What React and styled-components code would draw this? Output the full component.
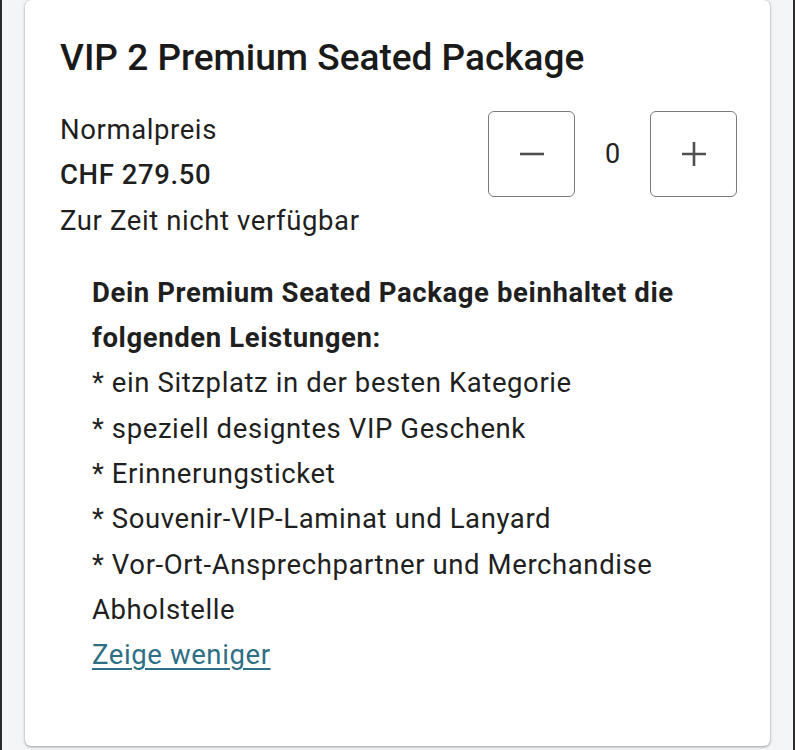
import React, { useState } from 'react'
import styled, { createGlobalStyle } from 'styled-components'

const GlobalStyle = createGlobalStyle`
  html, body {
    margin: 0;
    padding: 0;
    background: #f4f5f7;
  }
  body {
    font-family: Roboto, 'Noto Sans', Arial, sans-serif;
    -webkit-font-smoothing: antialiased;
  }
`

const features = [
  '* ein Sitzplatz in der besten Kategorie',
  '* speziell designtes VIP Geschenk',
  '* Erinnerungsticket',
  '* Souvenir-VIP-Laminat und Lanyard',
  '* Vor-Ort-Ansprechpartner und Merchandise Abholstelle',
]

function App() {
  const [count, setCount] = useState(0)

  return (
    <>
      <GlobalStyle />
      <Frame>
        <Card>
          <Title>VIP 2 Premium Seated Package</Title>

          <PriceRow>
            <PriceInfo>
              <span>Normalpreis</span>
              <Price>CHF 279.50</Price>
              <span>Zur Zeit nicht verfügbar</span>
            </PriceInfo>

            <Stepper>
              <StepButton aria-label="weniger" onClick={() => setCount(Math.max(0, count - 1))}>
                <svg width="26" height="26" viewBox="0 0 26 26">
                  <path d="M1 13h24" stroke="#505050" strokeWidth="2.6" />
                </svg>
              </StepButton>
              <Count>{count}</Count>
              <StepButton aria-label="mehr" onClick={() => setCount(count + 1)}>
                <svg width="26" height="26" viewBox="0 0 26 26">
                  <path d="M1 13h24M13 1v24" stroke="#505050" strokeWidth="2.6" />
                </svg>
              </StepButton>
            </Stepper>
          </PriceRow>

          <Description>
            <Lead>Dein Premium Seated Package beinhaltet die folgenden Leistungen:</Lead>
            {features.map(f => (
              <div key={f}>{f}</div>
            ))}
            <MoreLink href="#">Zeige weniger</MoreLink>
          </Description>
        </Card>
      </Frame>
    </>
  )
}

const Frame = styled.div`
  box-sizing: border-box;
  height: 750px;
  padding: 0 23px 4px 23px;
  border-left: 2px solid #2b2b2b;
  border-right: 2px solid #2b2b2b;
  background: #f4f5f7;
  display: flex;
`

const Card = styled.div`
  flex: 1;
  box-sizing: border-box;
  background: #fff;
  border-radius: 6px;
  box-shadow: 0 1px 3px rgba(0, 0, 0, 0.35), 0 0 1px rgba(0, 0, 0, 0.25);
  padding: 34px 33px 0 35px;
  color: #1f1f1f;
`

const Title = styled.h2`
  margin: 0;
  font-size: 37px;
  line-height: 48px;
  font-weight: 500;
  color: #1a1a1a;
`

const PriceRow = styled.div`
  display: flex;
  justify-content: space-between;
  align-items: flex-start;
  margin-top: 25px;
`

const PriceInfo = styled.div`
  display: flex;
  flex-direction: column;
  font-size: 27.5px;
  line-height: 45.3px;
  letter-spacing: 0.6px;
`

const Price = styled.span`
  font-weight: 500;
`

const Stepper = styled.div`
  display: flex;
  align-items: center;
  margin-top: 4px;
`

const StepButton = styled.button`
  width: 87px;
  height: 86px;
  box-sizing: border-box;
  border: 1.5px solid #7a7a7a;
  border-radius: 6px;
  background: #fff;
  display: flex;
  align-items: center;
  justify-content: center;
  padding: 0;
  cursor: pointer;
`

const Count = styled.span`
  width: 75px;
  text-align: center;
  font-size: 27px;
  color: #222;
`

const Description = styled.div`
  margin-top: 27px;
  padding-left: 32px;
  font-size: 27.5px;
  line-height: 45.3px;
  letter-spacing: 0.6px;
  color: #1f1f1f;
`

const Lead = styled.div`
  font-weight: 700;
`

const MoreLink = styled.a`
  display: inline-block;
  color: #2f6f86;
  text-decoration: underline;
  text-underline-offset: 4px;
`

export default App
